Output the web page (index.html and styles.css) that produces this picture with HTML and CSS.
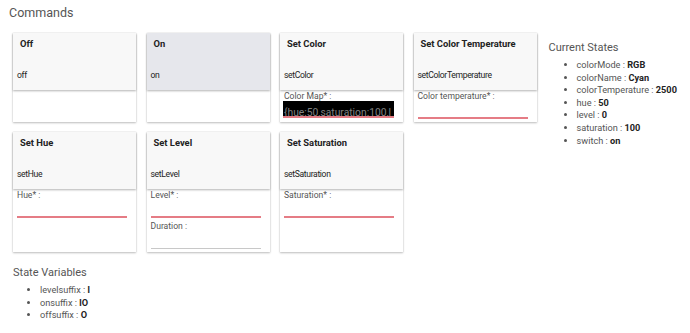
FILE: index.html
```html
<!DOCTYPE html>
<html>
<head>
<meta charset="utf-8">
<link rel="stylesheet" href="styles.css">
</head>
<body>
<div class="page">
  <h2 class="section-title">Commands</h2>
  <div class="main">
    <div class="grid">
      <div class="card">
        <div class="card-head"><div class="card-title">Off</div><div class="card-cmd">off</div></div>
        <div class="card-body"></div>
      </div>
      <div class="card">
        <div class="card-head active"><div class="card-title">On</div><div class="card-cmd">on</div></div>
        <div class="card-body"></div>
      </div>
      <div class="card">
        <div class="card-head"><div class="card-title">Set Color</div><div class="card-cmd">setColor</div></div>
        <div class="card-body">
          <div class="field">
            <div class="label">Color Map* :</div>
            <div class="input dark required"><span class="val">{hue:50,saturation:100,l</span></div>
          </div>
        </div>
      </div>
      <div class="card">
        <div class="card-head"><div class="card-title">Set Color Temperature</div><div class="card-cmd">setColorTemperature</div></div>
        <div class="card-body">
          <div class="field">
            <div class="label">Color temperature* :</div>
            <div class="input required"></div>
          </div>
        </div>
      </div>
      <div class="card">
        <div class="card-head"><div class="card-title">Set Hue</div><div class="card-cmd">setHue</div></div>
        <div class="card-body">
          <div class="field">
            <div class="label">Hue* :</div>
            <div class="input required"></div>
          </div>
        </div>
      </div>
      <div class="card">
        <div class="card-head"><div class="card-title">Set Level</div><div class="card-cmd">setLevel</div></div>
        <div class="card-body">
          <div class="field">
            <div class="label">Level* :</div>
            <div class="input required"></div>
          </div>
          <div class="field">
            <div class="label">Duration :</div>
            <div class="input"></div>
          </div>
        </div>
      </div>
      <div class="card">
        <div class="card-head"><div class="card-title">Set Saturation</div><div class="card-cmd">setSaturation</div></div>
        <div class="card-body">
          <div class="field">
            <div class="label">Saturation* :</div>
            <div class="input required"></div>
          </div>
        </div>
      </div>
    </div>
    <div class="states">
      <h3 class="sub-title">Current States</h3>
      <ul class="list">
        <li>colorMode : <b>RGB</b></li>
        <li>colorName : <b>Cyan</b></li>
        <li>colorTemperature : <b>2500</b></li>
        <li>hue : <b>50</b></li>
        <li>level : <b>0</b></li>
        <li>saturation : <b>100</b></li>
        <li>switch : <b>on</b></li>
      </ul>
    </div>
  </div>
  <div class="vars">
    <h3 class="sub-title">State Variables</h3>
    <ul class="list">
      <li>levelsuffix : <b>l</b></li>
      <li>onsuffix : <b>lO</b></li>
      <li>offsuffix : <b>O</b></li>
    </ul>
  </div>
</div>
</body>
</html>
```
FILE: styles.css
```css
* { box-sizing: border-box; }
html, body { margin: 0; padding: 0; background: #fff; }
body { font-family: Roboto, "Liberation Sans", sans-serif; color: #333; }
.page { padding: 5px 0 0 9px; }
.section-title {
  margin: 0;
  font-size: 12.5px;
  font-weight: 400;
  color: #555;
  line-height: 15px;
}
.main { display: flex; gap: 12px; margin-top: 13px; margin-left: 4px; }
.grid {
  display: grid;
  grid-template-columns: repeat(4, 123px);
  column-gap: 10.5px;
  row-gap: 10px;
  align-items: stretch;
}
.card {
  display: flex;
  flex-direction: column;
  background: #fff;
  box-shadow: 0 1px 2px rgba(0,0,0,0.25), 0 0 1px rgba(0,0,0,0.15);
}
.card-head {
  height: 57px;
  background: #f8f8f8;
  padding: 4px 4px 0 4px;
  box-shadow: 0 1px 2px rgba(0,0,0,0.3);
  position: relative;
  z-index: 1;
}
.card-head.active { background: #e6e7ec; }
.card-title {
  font-size: 9.4px;
  font-weight: 700;
  color: #222;
  line-height: 13px;
  padding-left: 3px;
}
.card-cmd {
  margin-top: 19px;
  font-size: 8.6px;
  letter-spacing: -0.35px;
  color: #222;
  line-height: 12px;
}
.card-body { flex: 1; padding: 1px 9px 3px 3px; }
.field + .field { margin-top: 3px; }
.label {
  font-size: 8.6px;
  line-height: 10px;
  color: #555;
  padding-left: 1px;
}
.input {
  height: 18px;
  border-bottom: 1px solid #c8c8c8;
  overflow: hidden;
  white-space: nowrap;
  margin-left: 1px;
}
.input.required { border-bottom: 2px solid #e57c85; }
.input.dark {
  background: #000;
  height: 17px;
  margin-left: 0;
}
.input.dark .val {
  display: inline-block;
  font-size: 10.3px;
  line-height: 15px;
  color: #808080;
  padding-left: 1px;
}
.states { padding-top: 8px; }
.sub-title {
  margin: 0;
  font-size: 11px;
  font-weight: 400;
  color: #555;
  line-height: 14px;
}
.list {
  margin: 4px 0 0 0;
  font-size: 9.2px;
  line-height: 12.6px;
  color: #555;
}
.states .list { padding-left: 28px; }
.vars .list { padding-left: 27px; }
.list b { color: #222; font-weight: 700; }
.vars { margin-top: 14px; margin-left: 4px; }
.vars .list { margin-top: 4px; }
```
